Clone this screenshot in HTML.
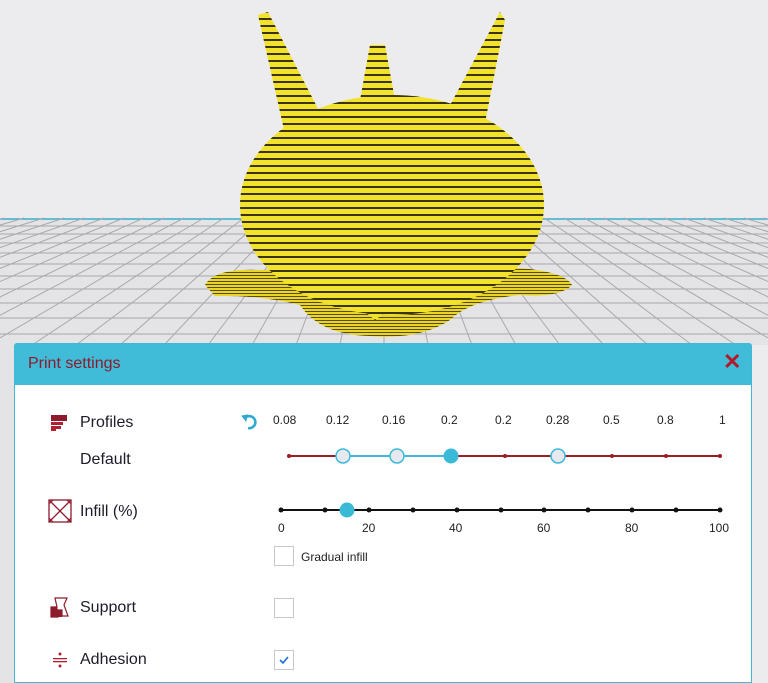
<!DOCTYPE html>
<html><head><meta charset="utf-8"><style>
body{margin:0;width:768px;height:683px;overflow:hidden;background:#ececef;font-family:"Liberation Sans",sans-serif;position:relative}
.abs{position:absolute}
.panel{left:14px;top:343px;width:738px;height:340px;background:#fff;border:1px solid #3fb9d6;box-sizing:border-box;border-radius:3px 3px 0 0}
.hdr{left:0;top:0;right:0;height:41px;background:#40bcd8}
.lbl{font-size:16px;color:#1c1c2a}
.sm{font-size:12px;color:#222}
.cb{width:20px;height:20px;border:1px solid #c8c8c8;box-sizing:border-box;background:#fff}
</style></head><body>
<svg class="abs" style="left:0;top:0" width="768" height="345">
<defs>
<pattern id="st" width="8" height="7" patternUnits="userSpaceOnUse"><rect width="8" height="7" fill="#f3e22b"/><rect y="4" width="8" height="2" fill="#3b3406"/></pattern>
<pattern id="st2" width="8" height="3" patternUnits="userSpaceOnUse"><rect width="8" height="3" fill="#e8d42a"/><rect y="2" width="8" height="1" fill="#5a4e08"/></pattern>
</defs>
<rect x="0" y="218" width="768" height="130" fill="#e4e4e6"/>
<line x1="0" y1="219" x2="768" y2="219" stroke="#3ab0cc" stroke-width="1.5"/>
<g stroke="#a9a9ad" stroke-width="1">
<line x1="0" y1="226" x2="768" y2="226"/><line x1="0" y1="234" x2="768" y2="234"/><line x1="0" y1="243" x2="768" y2="243"/><line x1="0" y1="253" x2="768" y2="253"/><line x1="0" y1="264" x2="768" y2="264"/><line x1="0" y1="276" x2="768" y2="276"/><line x1="0" y1="289" x2="768" y2="289"/><line x1="0" y1="303" x2="768" y2="303"/><line x1="0" y1="318" x2="768" y2="318"/><line x1="0" y1="334" x2="768" y2="334"/>
</g>
<g id="vl" stroke="#a9a9ad" stroke-width="1"></g>
<path d="M205 285 Q215 268 260 270 L520 268 Q565 272 572 285 Q560 298 520 295 Q470 300 450 320 Q420 340 370 336 Q320 335 300 305 Q260 295 215 296 Z" fill="url(#st2)"/>
<ellipse cx="392" cy="205" rx="152" ry="110" fill="url(#st)"/>
<path d="M258 15 L268 12 L360 190 L300 200 Z" fill="url(#st)"/>
<path d="M500 12 L505 20 L470 200 L410 180 Z" fill="url(#st)"/>
<path d="M370 45 L385 45 L415 210 L340 210 Z" fill="url(#st)"/>
<path d="M290 150 Q380 120 470 150 Q470 250 375 320 Q285 250 290 150Z" fill="url(#st)"/>
</svg>
<script>
(function(){var g=document.getElementById('vl'),s='';for(var k=-30;k<=30;k++){var t=384+20*k,b=384+44*k;s+='<line x1="'+t+'" y1="218" x2="'+b+'" y2="345"/>';}g.innerHTML=s;})();
</script>
<div class="abs" style="left:0;top:345px;width:14px;height:338px;background:#e4e4e6"></div>
<div class="abs panel">
<div class="abs hdr"></div>
<div class="abs" style="left:13px;top:11px;font-size:16px;color:#8d1b2c">Print settings</div>
<div class="abs" style="left:708px;top:5px;font-size:22px;font-weight:bold;color:#b01a2a">✕</div>
</div>
<svg class="abs" style="left:50px;top:414px" width="20" height="18"><rect x="1" y="1" width="16" height="6" fill="#8d1b2c"/><rect x="1" y="8" width="12" height="3" fill="#b02030"/><rect x="1" y="12" width="10" height="3" fill="#b02030"/><rect x="1" y="15" width="5" height="2" fill="#b02030"/></svg>
<div class="abs lbl" style="left:80px;top:414px">Profiles</div>
<div class="abs lbl" style="left:80px;top:451px">Default</div>
<svg class="abs" style="left:48px;top:499px" width="24" height="24" fill="none" stroke="#8d1b2c" stroke-width="1.3"><rect x="1" y="1" width="22" height="22"/><path d="M1 1L23 23M23 1L1 23"/><path d="M1 5L5 1M19 1L23 5M1 19L5 23M19 23L23 19" stroke-width="1"/></svg>
<div class="abs lbl" style="left:80px;top:503px">Infill (%)</div>
<svg class="abs" style="left:50px;top:597px" width="20" height="22"><path d="M5 1L17 1L14 8L18 19L12 19L12 13L8 13L8 20L1 20L1 10L7 10Z" fill="none" stroke="#8d1b2c" stroke-width="1.2"/><path d="M1 10L7 10L8 13L8 20L1 20Z" fill="#8d1b2c"/><rect x="8" y="13" width="4" height="7" fill="#8d1b2c"/></svg>
<div class="abs lbl" style="left:80px;top:599px">Support</div>
<svg class="abs" style="left:52px;top:651px" width="16" height="18" fill="#b02030"><circle cx="8" cy="3" r="1.5"/><rect x="1" y="7" width="14" height="1.3"/><rect x="1" y="10" width="14" height="1.3"/><circle cx="8" cy="15" r="1.5"/></svg>
<div class="abs lbl" style="left:80px;top:651px">Adhesion</div>
<svg class="abs" style="left:240px;top:412px" width="20" height="20" fill="none" stroke="#2ea9cf" stroke-width="2.6"><path d="M5 6 A6 6 0 1 1 8 16"/><path d="M2 4 L7 3 L6 9Z" fill="#2ea9cf" stroke-width="1"/></svg>
<div class="abs sm" style="left:273px;top:413px;width:460px">
<span class="abs" style="left:0">0.08</span><span class="abs" style="left:53px">0.12</span><span class="abs" style="left:109px">0.16</span><span class="abs" style="left:168px">0.2</span><span class="abs" style="left:222px">0.2</span><span class="abs" style="left:273px">0.28</span><span class="abs" style="left:330px">0.5</span><span class="abs" style="left:384px">0.8</span><span class="abs" style="left:446px">1</span></div>
<svg class="abs" style="left:270px;top:440px" width="470" height="110">
<line x1="19" y1="16" x2="450" y2="16" stroke="#9b1c24" stroke-width="2"/>
<line x1="73" y1="16" x2="181" y2="16" stroke="#3bbad7" stroke-width="2"/>
<g fill="#9b1c24"><circle cx="19" cy="16" r="2"/><circle cx="235" cy="16" r="2"/><circle cx="342" cy="16" r="2"/><circle cx="396" cy="16" r="2"/><circle cx="450" cy="16" r="2"/></g>
<g fill="#e8e9ee" stroke="#3bbad7" stroke-width="1.5"><circle cx="73" cy="16" r="7"/><circle cx="127" cy="16" r="7"/><circle cx="288" cy="16" r="7"/></g>
<circle cx="181" cy="16" r="7.5" fill="#3bbad7"/>
<line x1="11" y1="70" x2="450" y2="70" stroke="#111" stroke-width="2"/>
<g fill="#111"><circle cx="11" cy="70" r="2.5"/><circle cx="55" cy="70" r="2.5"/><circle cx="99" cy="70" r="2.5"/><circle cx="143" cy="70" r="2.5"/><circle cx="187" cy="70" r="2.5"/><circle cx="231" cy="70" r="2.5"/><circle cx="274" cy="70" r="2.5"/><circle cx="318" cy="70" r="2.5"/><circle cx="362" cy="70" r="2.5"/><circle cx="406" cy="70" r="2.5"/><circle cx="450" cy="70" r="2.5"/></g>
<circle cx="77" cy="70" r="7.5" fill="#3bbad7"/>
</svg>
<div class="abs sm" style="left:278px;top:521px;width:470px">
<span class="abs" style="left:0">0</span><span class="abs" style="left:84px">20</span><span class="abs" style="left:171px">40</span><span class="abs" style="left:259px">60</span><span class="abs" style="left:347px">80</span><span class="abs" style="left:431px">100</span></div>
<div class="abs cb" style="left:274px;top:546px"></div>
<div class="abs sm" style="left:301px;top:550px">Gradual infill</div>
<div class="abs cb" style="left:274px;top:598px"></div>
<div class="abs cb" style="left:274px;top:650px"></div>
<svg class="abs" style="left:278px;top:654px" width="12" height="12"><path d="M2 6L5 9L10 3" fill="none" stroke="#1a6fd6" stroke-width="1.6"/></svg>
</body></html>
